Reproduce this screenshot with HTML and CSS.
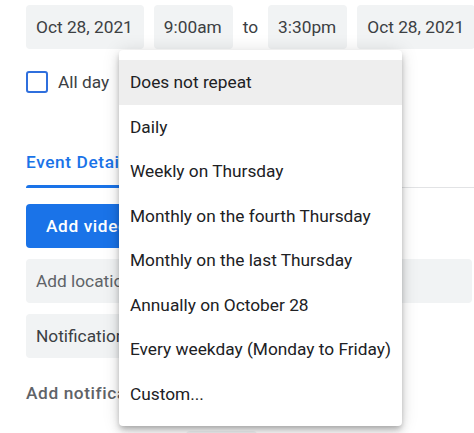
FILE: index.html
```html
<!DOCTYPE html>
<html>
<head>
<meta charset="utf-8">
<link rel="stylesheet" href="styles.css">
</head>
<body>
<div class="page">
  <div class="time-row">
    <div class="chip">Oct 28, 2021</div>
    <div class="chip">9:00am</div>
    <span class="to">to</span>
    <div class="chip">3:30pm</div>
    <div class="chip">Oct 28, 2021</div>
  </div>
  <div class="allday-row">
    <span class="checkbox"></span>
    <span class="allday-label">All day</span>
  </div>
  <div class="tabs">
    <div class="tab active">Event Details</div>
    <div class="tab">Find a Time</div>
  </div>
  <div class="content">
    <button class="btn-primary">Add video conferencing</button>
    <div class="field field-wide placeholder">Add location</div>
    <div class="field field-narrow">Notification</div>
    <div class="text-btn">Add notification</div>
    <div class="bottom-row">
      <div class="mini-chip"></div>
    </div>
  </div>

  <div class="menu">
    <div class="menu-item selected">Does not repeat</div>
    <div class="menu-item">Daily</div>
    <div class="menu-item">Weekly on Thursday</div>
    <div class="menu-item">Monthly on the fourth Thursday</div>
    <div class="menu-item">Monthly on the last Thursday</div>
    <div class="menu-item">Annually on October 28</div>
    <div class="menu-item">Every weekday (Monday to Friday)</div>
    <div class="menu-item">Custom...</div>
  </div>
</div>
</body>
</html>
```

FILE: styles.css
```css
* { box-sizing: border-box; }
html, body {
  margin: 0;
  padding: 0;
  background: #fff;
  overflow: hidden;
}
body {
  font-family: Roboto, "Liberation Sans", Arial, sans-serif;
  font-size: 17.3px;
  color: #3c4043;
  width: 474px;
  height: 433px;
}
.page {
  position: relative;
  width: 474px;
  height: 433px;
  overflow: hidden;
}
.time-row {
  display: flex;
  align-items: center;
  gap: 10px;
  padding-left: 26px;
  margin-top: 5px;
  height: 44px;
  white-space: nowrap;
}
.chip {
  flex: none;
  height: 44px;
  line-height: 44px;
  padding: 0 11px 0 10px;
  background: #f1f3f4;
  border-radius: 4px;
}
.to {
  flex: none;
}
.allday-row {
  display: flex;
  align-items: center;
  gap: 10px;
  padding-left: 26px;
  margin-top: 22px;
  height: 22px;
}
.checkbox {
  flex: none;
  width: 22px;
  height: 22px;
  border: 2px solid #2f6fdd;
  border-radius: 3px;
}
.tabs {
  display: flex;
  margin: 47px 0 0 26px;
  height: 48px;
  border-bottom: 1px solid #e2e3e5;
  gap: 24px;
}
.tab {
  position: relative;
  height: 48px;
  line-height: 45px;
  font-weight: 500;
  letter-spacing: 0.6px;
  color: #5f6368;
  white-space: nowrap;
}
.tab.active {
  color: #1a73e8;
}
.tab.active::after {
  content: "";
  position: absolute;
  left: 0;
  right: 0;
  bottom: 0;
  height: 3px;
  background: #1a73e8;
  border-radius: 3px 3px 0 0;
}
.content {
  padding-left: 26px;
  display: flex;
  flex-direction: column;
  align-items: flex-start;
}
.btn-primary {
  margin-top: 16px;
  height: 44px;
  padding: 0 20px;
  border: none;
  border-radius: 4px;
  background: #1a73e8;
  color: #fff;
  font-family: inherit;
  font-size: 17.3px;
  font-weight: 500;
  letter-spacing: 0.6px;
  white-space: nowrap;
}
.field {
  height: 44px;
  line-height: 44px;
  padding: 0 10px;
  background: #f1f3f4;
  border-radius: 4px;
  white-space: nowrap;
}
.field-wide {
  margin-top: 11px;
  width: 446px;
}
.field-narrow {
  margin-top: 11px;
  width: 200px;
}
.placeholder {
  color: #5f6368;
}
.text-btn {
  margin-top: 25px;
  height: 20px;
  line-height: 20px;
  font-weight: 500;
  letter-spacing: 0.6px;
  color: #5f6368;
  white-space: nowrap;
}
.bottom-row {
  margin-top: 28px;
  padding-left: 160px;
}
.mini-chip {
  width: 71px;
  height: 30px;
  background: #f1f3f4;
  border-radius: 4px;
}
.menu {
  position: absolute;
  left: 119px;
  top: 50px;
  width: 283px;
  padding: 10px 0;
  background: #fff;
  border-radius: 4px;
  box-shadow: 0 3px 5px -1px rgba(0,0,0,0.2), 0 6px 10px 0 rgba(0,0,0,0.14), 0 1px 18px 0 rgba(0,0,0,0.12);
}
.menu-item {
  height: 44.5px;
  line-height: 44.5px;
  padding-left: 11px;
  color: #202124;
  white-space: nowrap;
}
.menu-item.selected {
  background: #eeeeee;
}
```
